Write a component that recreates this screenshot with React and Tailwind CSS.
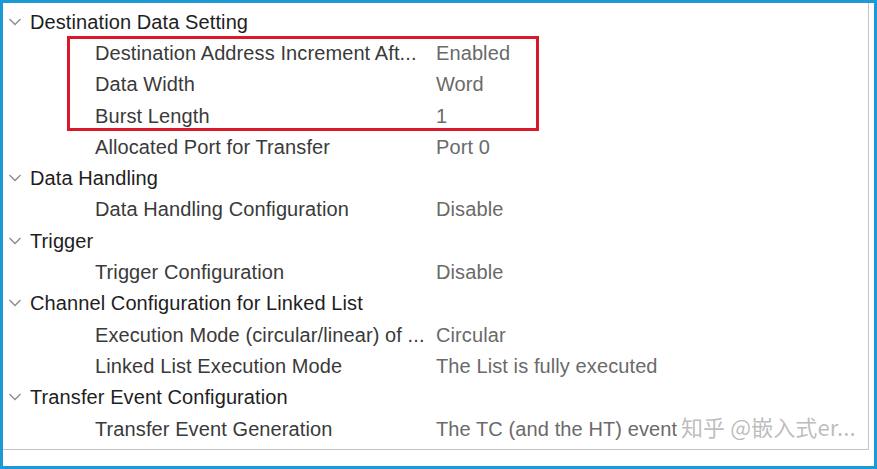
import React from 'react';

const rows = [
  { level: 0, label: 'Destination Data Setting' },
  { level: 1, label: 'Destination Address Increment Aft...', value: 'Enabled' },
  { level: 1, label: 'Data Width', value: 'Word' },
  { level: 1, label: 'Burst Length', value: '1' },
  { level: 1, label: 'Allocated Port for Transfer', value: 'Port 0' },
  { level: 0, label: 'Data Handling' },
  { level: 1, label: 'Data Handling Configuration', value: 'Disable' },
  { level: 0, label: 'Trigger' },
  { level: 1, label: 'Trigger Configuration', value: 'Disable' },
  { level: 0, label: 'Channel Configuration for Linked List' },
  { level: 1, label: 'Execution Mode (circular/linear) of ...', value: 'Circular' },
  { level: 1, label: 'Linked List Execution Mode', value: 'The List is fully executed' },
  { level: 0, label: 'Transfer Event Configuration' },
  { level: 1, label: 'Transfer Event Generation', value: 'The TC (and the HT) event' },
];

const Chevron = () => (
  <svg width="14" height="10" viewBox="0 0 14 10" className="shrink-0">
    <polyline points="1.5,2 7,7.5 12.5,2" fill="none" stroke="#8a8a8a" strokeWidth="1.3" />
  </svg>
);

const Row = ({ level, label, value }) => (
  <div className="flex items-center h-[31.3px] whitespace-nowrap">
    {level === 0 ? (
      <>
        <div className="w-[27px] pl-[5px] flex items-center">
          <Chevron />
        </div>
        <span className="text-[#1e1e1e]">{label}</span>
      </>
    ) : (
      <>
        <span className="w-[341px] pl-[92px] box-content shrink-0 text-[#3a3a3a] overflow-hidden">{label}</span>
        <span className="text-[#6a6a6a] overflow-hidden">{value}</span>
      </>
    )}
  </div>
);

export default function App() {
  return (
    <div className="w-[877px] h-[469px] bg-white border-[3px] border-[#1b9ad7] relative overflow-hidden font-['Liberation_Sans',Arial,sans-serif] text-[20px] tracking-[0.1px]">
      <div className="h-[447px] w-[866px] border-r border-b border-[#c4c4c4] pt-[3px] overflow-hidden">
        {rows.map((r, i) => (
          <Row key={i} {...r} />
        ))}
      </div>
      <div className="absolute left-[64px] top-[33px] w-[472px] h-[95px] border-[3px] border-[#d8192a]" />
      <div className="absolute left-[678px] top-[412px] whitespace-nowrap leading-none text-[22px] text-[#a0a0a0]/70 font-['Noto_Sans_CJK_SC',sans-serif]">
        知乎 @嵌入式er...
      </div>
    </div>
  );
}
